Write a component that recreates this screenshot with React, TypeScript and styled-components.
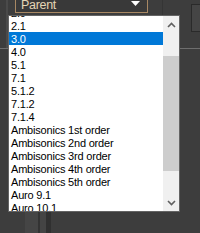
import styled, { createGlobalStyle } from 'styled-components';

const GlobalStyle = createGlobalStyle`
  html, body {
    margin: 0;
    padding: 0;
    background: #3d3d3d;
  }
`;

const formats = [
  '2.0',
  '2.1',
  '3.0',
  '4.0',
  '5.1',
  '7.1',
  '5.1.2',
  '7.1.2',
  '7.1.4',
  'Ambisonics 1st order',
  'Ambisonics 2nd order',
  'Ambisonics 3rd order',
  'Ambisonics 4th order',
  'Ambisonics 5th order',
  'Auro 9.1',
  'Auro 10.1',
];

const App = () => {
  return (
    <>
      <GlobalStyle />
      <Stage>
        <TopPanel>
          <Gutter />
          <Dropdown>
            <DropdownLabel>Parent</DropdownLabel>
            <svg width="9" height="5" viewBox="0 0 9 5">
              <path d="M0 0 H9 L4.5 5 Z" fill="#ffffff" />
            </svg>
          </Dropdown>
          <SideTools>
            <ToolBox />
          </SideTools>
        </TopPanel>
        <BottomPanel>
          <Strip $w={25} $bg="#3d3d3d" />
          <Strip $w={13} $bg="#454545" />
          <Strip $w={2} $bg="#333333" />
          <Strip $w={6} $bg="#444444" />
          <Strip $w={5} $bg="#303030" />
          <Strip $w={149} $bg="#3d3d3d" />
        </BottomPanel>

        <Popup>
          <List>
            <Items>
              {formats.map((f) => (
                <Item key={f} $selected={f === '3.0'}>
                  {f}
                </Item>
              ))}
            </Items>
          </List>
          <Scrollbar>
            <ArrowButton>
              <svg width="9" height="6" viewBox="0 0 9 6">
                <path d="M1 5 L4.5 1.5 L8 5" stroke="#606060" strokeWidth="1.6" fill="none" />
              </svg>
            </ArrowButton>
            <Track>
              <Thumb />
            </Track>
            <ArrowButton>
              <svg width="9" height="6" viewBox="0 0 9 6">
                <path d="M1 1 L4.5 4.5 L8 1" stroke="#606060" strokeWidth="1.6" fill="none" />
              </svg>
            </ArrowButton>
          </Scrollbar>
        </Popup>
      </Stage>
    </>
  );
};

const Stage = styled.div`
  position: relative;
  width: 200px;
  height: 233px;
  overflow: hidden;
  display: flex;
  flex-direction: column;
  background: #3d3d3d;
  font-family: 'Liberation Sans', Arial, sans-serif;
`;

const TopPanel = styled.div`
  height: 48px;
  display: flex;
  align-items: flex-start;
  border-bottom: 1px solid #6e6e6e;
`;

const Gutter = styled.div`
  width: 8px;
  height: 48px;
  margin-right: 7px;
  border-right: 2px solid #4a4a4a;
  box-sizing: border-box;
`;

const Dropdown = styled.div`
  width: 133px;
  height: 14px;
  box-sizing: border-box;
  margin-top: -1px;
  border: 1px solid #a88863;
  background: #393939;
  display: flex;
  align-items: center;
  justify-content: space-between;
  padding: 0 7px 0 5px;
  overflow: hidden;

  svg {
    margin-top: -6px;
  }
`;

const DropdownLabel = styled.span`
  color: #e4d6b6;
  font-size: 12.5px;
  letter-spacing: -0.3px;
  line-height: 12px;
  margin-top: -3px;
`;

const SideTools = styled.div`
  flex: 1;
  display: flex;
  justify-content: flex-end;
  height: 48px;
  border-left: 1px solid #353535;
  margin-left: 14px;
`;

const ToolBox = styled.div`
  width: 8px;
  height: 26px;
  margin-top: 4px;
  border: 1px solid #2a2a2a;
  border-right: none;
  background: #454545;
`;

const BottomPanel = styled.div`
  flex: 1;
  display: flex;
`;

const Strip = styled.div<{ $w: number; $bg: string }>`
  width: ${(p) => p.$w}px;
  background: ${(p) => p.$bg};
`;

const Popup = styled.div`
  position: absolute;
  left: 8px;
  top: 15px;
  width: 172px;
  height: 197px;
  box-sizing: border-box;
  border: 1px solid #646464;
  background: #ffffff;
  display: flex;
`;

const List = styled.div`
  flex: 1;
  overflow: hidden;
`;

const Items = styled.div`
  margin-top: -10px;
`;

const Item = styled.div<{ $selected: boolean }>`
  height: 13px;
  line-height: 14px;
  padding-left: 2px;
  font-size: 11px;
  letter-spacing: -0.2px;
  white-space: nowrap;
  color: ${(p) => (p.$selected ? '#ffffff' : '#000000')};
  background: ${(p) => (p.$selected ? '#0078d7' : 'transparent')};
`;

const Scrollbar = styled.div`
  width: 16px;
  display: flex;
  flex-direction: column;
  background: #f0f0f0;
`;

const ArrowButton = styled.div`
  height: 17px;
  display: flex;
  align-items: center;
  justify-content: center;
`;

const Track = styled.div`
  flex: 1;
  padding: 23px 0;
  display: flex;
`;

const Thumb = styled.div`
  flex: 1;
  background: #cdcdcd;
`;

export default App;
